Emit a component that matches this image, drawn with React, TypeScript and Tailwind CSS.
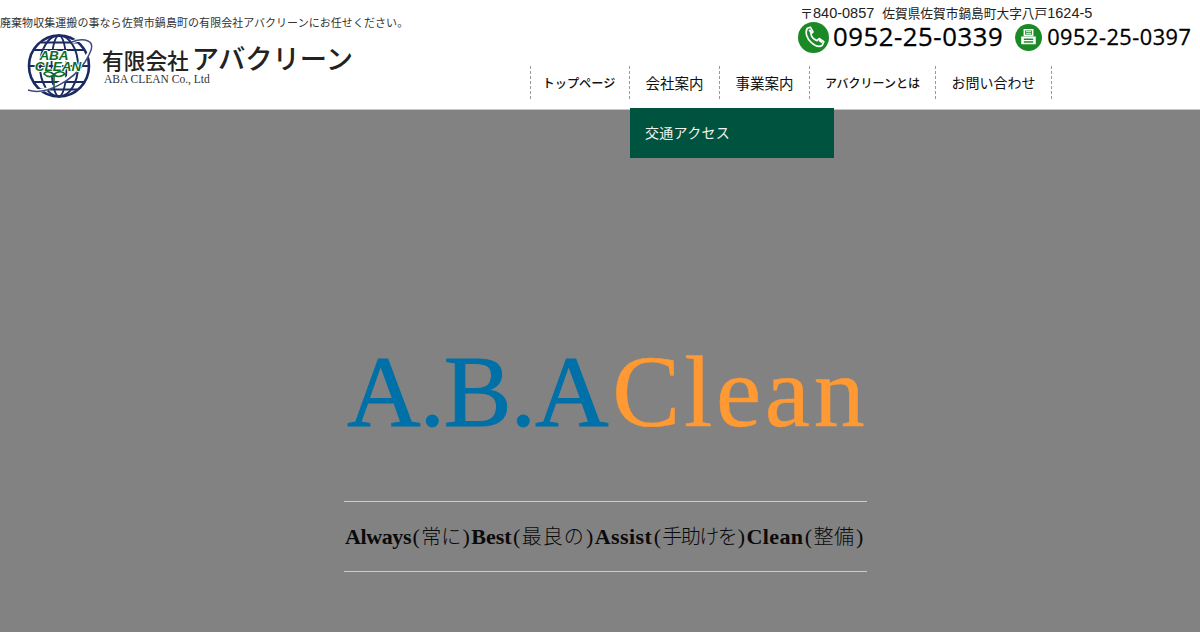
import React from "react";

const cjk = { fontFamily: '"Noto Sans CJK JP", "Noto Sans", sans-serif' };
const serif = { fontFamily: '"Liberation Serif", serif' };
const sans = { fontFamily: '"Liberation Sans", sans-serif' };

function Globe() {
  return (
    <svg width="70" height="70" viewBox="0 0 70 70" className="block">
      <g fill="none" stroke="#1a2a63">
        <ellipse cx="32" cy="32" rx="30" ry="30.5" strokeWidth="2.6" />
        <ellipse cx="32" cy="32" rx="19" ry="30.5" strokeWidth="2" />
        <ellipse cx="32" cy="32" rx="7.5" ry="30.5" strokeWidth="1.8" />
        <path d="M7 16 H57 M3 32 H61 M7 48 H57 M14 8.5 H50 M14 55.5 H50" strokeWidth="2" />
        <path d="M1 55 C16 62 44 46 56 28 C63 18 68 10 61 7 C56 5 50 6 45 8" strokeWidth="3.2" stroke="#ffffff" />
        <path d="M1 56 C18 62 46 47 58 28 C64 18 68 10 61 7 C56 5 50 6 45 8" strokeWidth="1.5" stroke="#3c4c80" />
      </g>
      <g fontSize="13.5" fontStyle="italic" fontWeight="700" fill="#0f6a2b" stroke="#ffffff" strokeWidth="1.8" paintOrder="stroke" style={sans}>
        <text x="27" y="26" textAnchor="middle">ABA</text>
        <text x="31" y="36.5" textAnchor="middle">CLEAN</text>
      </g>
      <path d="M27 39 V54 M27 41 C23 36.5 18 37 17 40 C20 43 24 43 27 41 C30 36.5 36 37 38 40 C34 43 30 43 27 41" fill="#ffffff" stroke="#0f6a2b" strokeWidth="1.6" />
    </svg>
  );
}

function PhoneBadge() {
  return (
    <svg width="31" height="31" viewBox="0 0 30 30" className="block shrink-0">
      <circle cx="15" cy="15" r="15" fill="#1b8a26" />
      <path d="M9 6 L12 5 L14.5 9.5 L12.5 11.5 C13 14 15.5 17 18.5 18 L20.5 16 L25 19 L23.5 22.5 C21 24.5 17 23.5 13 20 C8.5 16 6.5 10 9 6 Z" fill="none" stroke="#ffffff" strokeWidth="1.6" strokeLinejoin="round" />
      <path d="M11 7.5 L13 10.5 M20.5 17.5 L23.5 19.8" stroke="#ffffff" strokeWidth="2" />
    </svg>
  );
}

function FaxBadge() {
  return (
    <svg width="27" height="27" viewBox="0 0 26 26" className="block shrink-0">
      <circle cx="13" cy="13" r="13" fill="#1b8a26" />
      <path d="M9 5.5 H17 V11 H9 Z" fill="none" stroke="#ffffff" strokeWidth="1.5" />
      <path d="M10.5 7.5 H15.5 M10.5 9.3 H15.5" stroke="#ffffff" strokeWidth="1" />
      <path d="M6 12 H20 V19.5 H6 Z" fill="#ffffff" />
      <rect x="8.5" y="14" width="9" height="1.4" fill="#1b8a26" />
      <rect x="8.5" y="16.6" width="9" height="1.4" fill="#1b8a26" />
    </svg>
  );
}

const nav = [
  { label: "トップページ", w: "w-[99px]", cls: "text-[12.2px] font-medium pr-[2px] pt-[1px]" },
  { label: "会社案内", w: "w-[90px]", cls: "text-[14.5px]" },
  { label: "事業案内", w: "w-[90px]", cls: "text-[14.5px]" },
  { label: "アバクリーンとは", w: "w-[126px]", cls: "text-[12px] font-medium" },
  { label: "お問い合わせ", w: "w-[116px]", cls: "text-[14px]" },
];

function Paren({ children, track }: { children: React.ReactNode; track: string }) {
  return (
    <span className="font-normal">
      <span className="mx-[1.4px]">(</span>
      <span className={`font-light text-[20px] ${track}`} style={cjk}>{children}</span>
      <span className="mx-[1.4px]">)</span>
    </span>
  );
}

export default function App() {
  return (
    <div className="h-[632px] w-[1200px] overflow-hidden bg-[#828282] flex flex-col">
      <header className="relative h-[110px] shrink-0 bg-white border-b border-[#c8c8c8] flex">
        <div className="w-[530px] shrink-0">
          <p className="pt-[14px] text-[11px] leading-[16px] text-[#333333] tracking-[0.06px] whitespace-nowrap" style={cjk}>
            廃棄物収集運搬の事なら佐賀市鍋島町の有限会社アバクリーンにお任せください。
          </p>
          <div className="flex pl-[27px] pt-[4px]">
            <Globe />
            <div className="pl-[5px]">
              <div className="text-[#222222] leading-[30px] h-[30px] mt-[8px] whitespace-nowrap flex items-baseline" style={cjk}>
                <span className="text-[21.7px] font-medium mr-[3px]">有限会社</span>
                <span className="text-[27.3px] font-medium">アバクリーン</span>
              </div>
              <div className="text-[11.5px] leading-[12px] pt-[1px] pl-[2px] text-[#333333]" style={serif}>
                ABA CLEAN Co., Ltd
              </div>
            </div>
          </div>
        </div>
        <div className="flex flex-col">
          <div className="pl-[270px] h-[66px]">
            <p className="pt-[5px] text-[14.5px] leading-[16px] text-[#222222] whitespace-nowrap" style={sans}>
              <span className="text-[13px]" style={cjk}>〒</span>840-0857
              <span className="text-[12.7px] ml-[8px]" style={cjk}>佐賀県佐賀市鍋島町大字八戸</span>1624-5
            </p>
            <div className="flex items-center -ml-[2px] h-[32px] whitespace-nowrap text-black [-webkit-text-stroke:0.3px_#000000]" style={{ fontFamily: '"Open Sans", sans-serif' }}>
              <PhoneBadge />
              <span className="pl-[4px] text-[25.7px] leading-[32px] tracking-[0.022em]">0952-25-0339</span>
              <span className="w-[12px]" />
              <FaxBadge />
              <span className="pl-[5px] text-[21.7px] leading-[32px] tracking-[0.024em]">0952-25-0397</span>
            </div>
          </div>
          <nav className="flex h-[33px] border-l border-dashed border-[#999999] w-max">
            {nav.map((n) => (
              <div key={n.label} className={`${n.w} border-r border-dashed border-[#999999] flex items-center justify-center text-[#111111] whitespace-nowrap ${n.cls}`} style={cjk}>
                {n.label}
              </div>
            ))}
          </nav>
        </div>
        <div className="absolute left-[630px] top-[108px] w-[204px] h-[50px] bg-[#00533f] text-[#eef4f0] text-[14px] tracking-[0.02em] pl-[15px] pb-[2px] flex items-center" style={cjk}>
          交通アクセス
        </div>
      </header>
      <main className="pl-[344px] pt-[223px]">
        <h1 className="w-[523px] text-[102px] leading-[118px] pl-[3px] whitespace-nowrap" style={serif}>
          <span className="text-[#0070a8] [-webkit-text-stroke:0.9px_#0070a8] tracking-[-1.2px]">A.B.A</span>
          <span className="text-[#ff9933] [-webkit-text-stroke:0.5px_#ff9933] tracking-[3.6px] ml-[5px]">Clean</span>
        </h1>
        <div className="mt-[50px] w-[523px] h-[71px] pl-[1px] border-y border-[#cccccc] flex items-center whitespace-nowrap text-[22px] font-bold text-[#0a0a0a]" style={serif}>
          <span className="tracking-[-0.4px]">Always</span>
          <Paren track="tracking-[0px]">常に</Paren>
          <span>Best</span>
          <Paren track="tracking-[1px]">最良の</Paren>
          <span className="tracking-[0.4px]">Assist</span>
          <Paren track="tracking-[-1.5px]">手助けを</Paren>
          <span className="tracking-[0.4px]">Clean</span>
          <Paren track="tracking-[0.5px]">整備</Paren>
        </div>
      </main>
    </div>
  );
}
